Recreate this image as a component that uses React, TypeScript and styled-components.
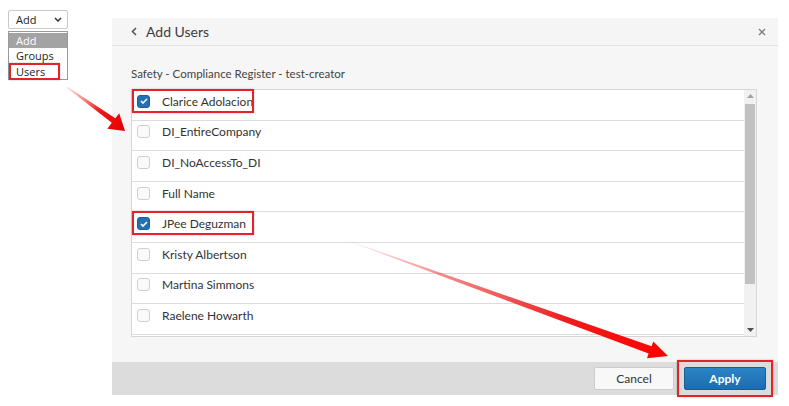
import styled, { createGlobalStyle } from 'styled-components';

const GlobalStyle = createGlobalStyle`
  * { box-sizing: border-box; }
  html, body { margin: 0; padding: 0; background: #fff; }
  body { font-family: Lato, "Liberation Sans", sans-serif; color: #333; }
`;

const users = [
  { name: 'Clarice Adolacion', checked: true, marked: true },
  { name: 'DI_EntireCompany', checked: false, marked: false },
  { name: 'DI_NoAccessTo_DI', checked: false, marked: false },
  { name: 'Full Name', checked: false, marked: false },
  { name: 'JPee Deguzman', checked: true, marked: true },
  { name: 'Kristy Albertson', checked: false, marked: false },
  { name: 'Martina Simmons', checked: false, marked: false },
  { name: 'Raelene Howarth', checked: false, marked: false },
];

const Page = styled.div`
  position: relative;
  width: 789px;
  height: 406px;
  display: flex;
  align-items: flex-start;
  gap: 44px;
  padding: 10px 0 0 8px;
  overflow: hidden;
`;

/* ---- left dropdown ---- */
const DropColumn = styled.div`
  width: 60px;
  display: flex;
  flex-direction: column;
  gap: 2px;
  font-family: "Open Sans", "Liberation Sans", sans-serif;
  font-size: 11px;
  color: #222;
`;

const SelectBox = styled.div`
  height: 19px;
  border: 1px solid #c8c8c8;
  border-radius: 2px;
  display: flex;
  align-items: center;
  justify-content: space-between;
  padding: 0 5px 0 7px;
  background: #fff;
`;

const OptionList = styled.div`
  border: 1px solid #9a9a9a;
  display: flex;
  flex-direction: column;
  padding: 1px 0 0;
  background: #fff;
`;

const Option = styled.div<{ $selected?: boolean }>`
  position: relative;
  height: 15.3px;
  line-height: 15.3px;
  padding-left: 7px;
  background: ${(p) => (p.$selected ? '#a3a3a3' : 'transparent')};
  color: ${(p) => (p.$selected ? '#fff' : '#222')};
`;

const Callout = styled.span<{ $top: number; $left: number; $w: number; $h: number }>`
  position: absolute;
  top: ${(p) => p.$top}px;
  left: ${(p) => p.$left}px;
  width: ${(p) => p.$w}px;
  height: ${(p) => p.$h}px;
  border: 2px solid #e2232a;
  box-shadow: 0 0 2px rgba(0, 0, 0, 0.25);
  pointer-events: none;
  z-index: 2;
`;

/* ---- dialog ---- */
const Dialog = styled.section`
  margin-top: 8px;
  width: 666px;
  height: 377px;
  background: #f6f6f6;
  display: flex;
  flex-direction: column;
`;

const Header = styled.header`
  flex: none;
  height: 28px;
  display: flex;
  align-items: center;
  padding: 0 12px 0 19px;
  border-bottom: 1px solid #e2e2e2;
  background: #f5f5f5;
`;

const BackIcon = styled.svg`
  width: 6px;
  height: 9px;
  margin-right: 9px;
`;

const Title = styled.h1`
  margin: 0;
  flex: 1;
  font-size: 14px;
  font-weight: 400;
  color: #3d3d3d;
`;

const CloseIcon = styled.svg`
  width: 8px;
  height: 8px;
`;

const Body = styled.div`
  flex: 1;
  padding: 21px 21px 0 19px;
  display: flex;
  flex-direction: column;
`;

const Label = styled.div`
  height: 14px;
  line-height: 14px;
  font-size: 11.5px;
  color: #444;
  margin-bottom: 8px;
`;

const ListBox = styled.div`
  height: 248px;
  border: 1px solid #d6d6d6;
  background: #fff;
  display: flex;
`;

const Rows = styled.div`
  flex: 1;
  display: flex;
  flex-direction: column;
`;

const Row = styled.div`
  position: relative;
  height: 30.6px;
  flex: none;
  display: flex;
  align-items: center;
  gap: 12px;
  padding: 0 0 7px 5px;
  border-bottom: 1px solid #dcdcdc;
  font-size: 12px;
  color: #333;
`;

const Check = styled.span<{ $on: boolean }>`
  width: 13px;
  height: 13px;
  flex: none;
  border-radius: 3px;
  border: 1px solid ${(p) => (p.$on ? '#1b5f99' : '#cfcfcf')};
  background: ${(p) => (p.$on ? '#2271b3' : '#fafafa')};
  display: flex;
  align-items: center;
  justify-content: center;
`;

const Scrollbar = styled.div`
  width: 12px;
  flex: none;
  display: flex;
  flex-direction: column;
  align-items: center;
  background: #f1f1f1;
  padding: 0 1px;
`;

const ScrollArrow = styled.div`
  height: 12px;
  display: flex;
  align-items: center;
  justify-content: center;
`;

const Thumb = styled.div`
  width: 10px;
  height: 180px;
  margin-top: 2px;
  background: #c1c1c1;
`;

const Track = styled.div`
  flex: 1;
`;

const Footer = styled.footer`
  flex: none;
  height: 33px;
  background: #dcdcdc;
  display: flex;
  align-items: center;
  justify-content: flex-end;
  gap: 10px;
  padding-right: 12px;
`;

const Button = styled.button<{ $primary?: boolean }>`
  position: relative;
  width: ${(p) => (p.$primary ? 82 : 80)}px;
  height: 23px;
  border-radius: 2px;
  font-family: Lato, "Liberation Sans", sans-serif;
  font-size: 12px;
  font-weight: ${(p) => (p.$primary ? 700 : 400)};
  color: ${(p) => (p.$primary ? '#fff' : '#333')};
  border: 1px solid ${(p) => (p.$primary ? '#175d96' : '#cdcdcd')};
  background: ${(p) => (p.$primary ? 'linear-gradient(#2b84c8, #1c6dae)' : '#f8f8f8')};
  padding: 0;
`;

const ArrowLayer = styled.svg`
  position: absolute;
  left: 0;
  top: 0;
  width: 789px;
  height: 406px;
  pointer-events: none;
  z-index: 3;
`;

export default function App() {
  return (
    <>
      <GlobalStyle />
      <Page>
        <DropColumn>
          <SelectBox>
            <span>Add</span>
            <svg width="8" height="5" viewBox="0 0 8 5">
              <path d="M1 1l3 3 3-3" fill="none" stroke="#333" strokeWidth="1.5" />
            </svg>
          </SelectBox>
          <OptionList>
            <Option $selected>Add</Option>
            <Option>Groups</Option>
            <Option>
              Users
              <Callout $top={-1} $left={0} $w={51} $h={17} />
            </Option>
          </OptionList>
        </DropColumn>

        <Dialog>
          <Header>
            <BackIcon viewBox="0 0 6 9">
              <path d="M5 1L1.5 4.5 5 8" fill="none" stroke="#555" strokeWidth="1.6" />
            </BackIcon>
            <Title>Add Users</Title>
            <CloseIcon viewBox="0 0 8 8">
              <path d="M1 1l6 6M7 1L1 7" stroke="#808080" strokeWidth="1.4" />
            </CloseIcon>
          </Header>
          <Body>
            <Label>Safety - Compliance Register - test-creator</Label>
            <ListBox>
              <Rows>
                {users.map((u) => (
                  <Row key={u.name}>
                    <Check $on={u.checked}>
                      {u.checked && (
                        <svg width="8" height="6" viewBox="0 0 8 6">
                          <path d="M1 3l2 2 4-4" fill="none" stroke="#fff" strokeWidth="1.6" />
                        </svg>
                      )}
                    </Check>
                    <span>{u.name}</span>
                    {u.marked && <Callout $top={-1} $left={0} $w={122} $h={24} />}
                  </Row>
                ))}
              </Rows>
              <Scrollbar>
                <ScrollArrow>
                  <svg width="7" height="4" viewBox="0 0 7 4">
                    <path d="M0 4L3.5 0 7 4z" fill="#a3a3a3" />
                  </svg>
                </ScrollArrow>
                <Thumb />
                <Track />
                <ScrollArrow>
                  <svg width="7" height="4" viewBox="0 0 7 4">
                    <path d="M0 0L3.5 4 7 0z" fill="#505050" />
                  </svg>
                </ScrollArrow>
              </Scrollbar>
            </ListBox>
          </Body>
          <Footer>
            <Button>Cancel</Button>
            <Button $primary>
              Apply
              <Callout $top={-8} $left={-8} $w={96} $h={37} />
            </Button>
          </Footer>
        </Dialog>

        <ArrowLayer viewBox="0 0 789 406">
          <defs>
            <linearGradient id="a1" gradientUnits="userSpaceOnUse" x1="67" y1="87" x2="125" y2="130">
              <stop offset="0" stopColor="#ff5a5a" stopOpacity="0.2" />
              <stop offset="0.55" stopColor="#f01818" />
              <stop offset="1" stopColor="#e80000" />
            </linearGradient>
            <linearGradient id="a2" gradientUnits="userSpaceOnUse" x1="332" y1="235" x2="667" y2="356">
              <stop offset="0" stopColor="#ff4040" stopOpacity="0" />
              <stop offset="0.35" stopColor="#f03030" stopOpacity="0.6" />
              <stop offset="0.7" stopColor="#ee1c1c" />
              <stop offset="1" stopColor="#ff0000" />
            </linearGradient>
          </defs>
          <polygon
            points="67,86.4 115.3,118.2 119.2,113.3 125,131 107.3,128.8 111.8,122.8 66.4,87.6"
            fill="url(#a1)"
          />
          <polygon
            points="332,235 651.6,346.2 653.3,341.5 668,356 647,358.3 648.6,353.6"
            fill="url(#a2)"
          />
        </ArrowLayer>
      </Page>
    </>
  );
}
